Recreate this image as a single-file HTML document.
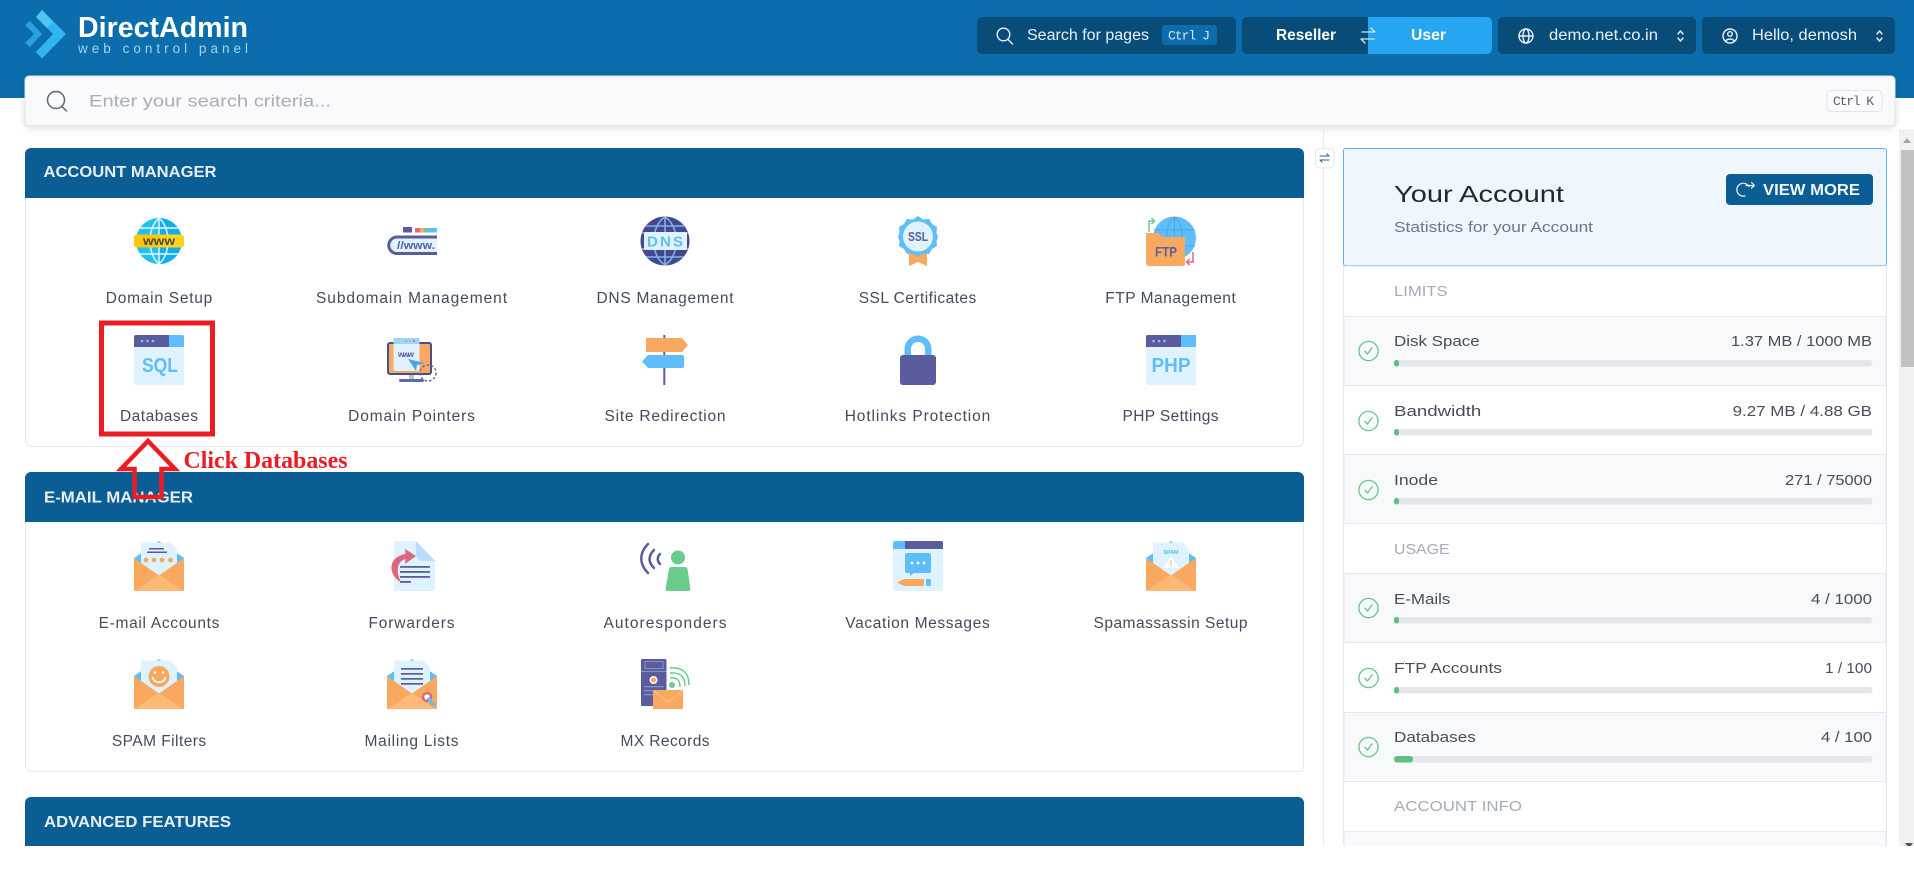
<!DOCTYPE html>
<html lang="en">
<head>
<meta charset="utf-8">
<title>DirectAdmin</title>
<style>
html,body{margin:0;padding:0;background:#fff;width:1914px;height:869px;overflow:hidden}
svg{display:block;font-family:"Liberation Sans",sans-serif}
.l{font-size:15.5px;fill:#434b5c;text-anchor:middle}
.h{font-size:15.5px;font-weight:700;fill:#e6eef4}
.t{font-size:15.5px;fill:#e8f1f7}
.s{font-size:15px;fill:#474d5a}
.v{font-size:15px;fill:#474d5a;text-anchor:end}
.g{font-size:14.5px;fill:#a6abb9}
.m{font-family:"Liberation Mono",monospace;font-size:13px}
.ln{fill:none;stroke:#e8f1f7;stroke-width:1.4;stroke-linecap:round;stroke-linejoin:round}
.ck{fill:none;stroke:#62c58a;stroke-width:1.3;stroke-linecap:round;stroke-linejoin:round}
</style>
</head>
<body>
<svg width="1914" height="869" viewBox="0 0 1914 869" xmlns="http://www.w3.org/2000/svg">
<defs>
<clipPath id="view"><rect width="1914" height="846"/></clipPath>
<clipPath id="ggl"><circle cx="25" cy="25" r="23"/></clipPath>
<clipPath id="gdn"><circle cx="25" cy="25" r="24.500"/></clipPath>
<g id="check"><circle r="9.6" class="ck"/><path class="ck" d="M-3.5 .3 -1 3 3.6 -3.2"/></g>
<g id="envBack"><polygon points="0,17 25,0 50,17 50,26 0,26" fill="#5fbdf9"/><polygon points="7,1.500 36,1.500 43,8.500 43,29 25,36 7,29" fill="#def2ff"/></g>
<g id="envFront"><path d="M0 17 25 34.500 50 17V49a1 1 0 0 1-1 1H1a1 1 0 0 1-1-1Z" fill="#f9a95f"/><path d="M1 50 25 33.500 49 50Z" fill="#ffb976"/></g>
</defs>
<g clip-path="url(#view)">

<!-- top bar -->
<rect width="1914" height="98" fill="#0b6dab"/>
<polygon points="36,17 42,10 66,34 42,58.500 36,52 53,34" fill="#2fb6ef"/>
<polygon points="25,25 30,21 42,34 30,47 25,43 34,34" fill="#2a9fd8"/>
<polygon points="36,17 42,10 53,22 47,28" fill="#4fc5f4"/>
<text x="78" y="37" font-size="29" font-weight="700" fill="#fff" textLength="170" lengthAdjust="spacingAndGlyphs">DirectAdmin</text>
<text x="78" y="53" font-size="13.500" fill="#a5d3ec" textLength="170">web control panel</text>

<rect x="977" y="17" width="259" height="37" rx="5" fill="#084c7a"/>
<circle cx="1003.500" cy="34.500" r="6.300" class="ln"/><path class="ln" d="M1008 39.500 1012.500 44"/>
<text x="1027" y="40" class="t" textLength="122" lengthAdjust="spacingAndGlyphs">Search for pages</text>
<rect x="1162" y="25" width="55" height="20" rx="3" fill="#0b6dab"/>
<text x="1168" y="39.500" class="m" fill="#d4e9f6" textLength="42">Ctrl J</text>

<rect x="1242" y="17" width="250" height="37" rx="5" fill="#084c7a"/>
<path d="M1368 17H1487a5 5 0 0 1 5 5V49a5 5 0 0 1-5 5H1368Z" fill="#26a5f0"/>
<text x="1276" y="40" class="t" style="font-weight:700;fill:#fff" textLength="60" lengthAdjust="spacingAndGlyphs">Reseller</text>
<text x="1411" y="40" class="t" style="font-weight:700;fill:#fff" textLength="35" lengthAdjust="spacingAndGlyphs">User</text>
<path d="M1362 32H1375L1371 28M1374 39H1361L1365 43" fill="none" stroke="#cfe6f5" stroke-width="1.300" stroke-linecap="round" stroke-linejoin="round"/>

<rect x="1498" y="17" width="198" height="37" rx="5" fill="#084c7a"/>
<circle cx="1526" cy="36" r="7" class="ln"/><ellipse cx="1526" cy="36" rx="3" ry="7" class="ln"/><path class="ln" d="M1519 36H1533"/>
<text x="1549" y="40" class="t" textLength="109" lengthAdjust="spacingAndGlyphs">demo.net.co.in</text>
<path class="ln" d="M1678 34 1680.500 31 1683 34M1678 38 1680.500 41 1683 38"/>

<rect x="1702" y="17" width="193" height="37" rx="5" fill="#084c7a"/>
<circle cx="1730" cy="36" r="7" class="ln"/><circle cx="1730" cy="34" r="2.300" class="ln"/><path class="ln" d="M1726 41C1727 38.500 1733 38.500 1734 41"/>
<text x="1752" y="40" class="t" textLength="105" lengthAdjust="spacingAndGlyphs">Hello, demosh</text>
<path class="ln" d="M1877 34 1879.500 31 1882 34M1877 38 1879.500 41 1882 38"/>

<!-- search -->
<rect x="25" y="76" width="1870" height="49.500" rx="4" fill="#f9fafc" stroke="#e4e7ec" style="filter:drop-shadow(0 2px 4px rgba(0,0,0,.14))"/>
<circle cx="56" cy="100" r="8.500" fill="none" stroke="#5f6673" stroke-width="1.500"/><path d="M62 106.500 66.500 111" stroke="#5f6673" stroke-width="1.500" stroke-linecap="round"/>
<text x="89" y="106.500" font-size="17" fill="#a8acb9" textLength="242" lengthAdjust="spacingAndGlyphs">Enter your search criteria...</text>
<rect x="1827" y="90.500" width="55" height="21" rx="4" fill="#fafbfc" stroke="#e2e4e8"/>
<text x="1833" y="105" class="m" fill="#5a5f69" textLength="41">Ctrl K</text>

<!-- divider + scrollbar -->
<rect x="1323" y="129" width="1" height="717" fill="#e7e9ed"/>
<rect x="1899" y="129" width="15" height="717" fill="#f1f1f1"/>
<rect x="1901" y="150" width="13" height="217" fill="#c1c1c1"/>
<polygon points="1907,138 1903,143 1911,143" fill="#a3a3a3"/>
<polygon points="1905,843 1913,843 1909,848" fill="#505050"/>

<!-- ACCOUNT MANAGER -->
<rect x="25.500" y="150" width="1278" height="296.500" rx="6" fill="#fff" stroke="#e5e7eb"/>
<path d="M25 198V154a6 6 0 0 1 6-6H1298a6 6 0 0 1 6 6V198Z" fill="#0a5e93"/>
<text x="43.500" y="177" class="h" textLength="173" lengthAdjust="spacingAndGlyphs">ACCOUNT MANAGER</text>

<text x="159" y="303" class="l" textLength="106.500">Domain Setup</text>
<text x="411.500" y="303" class="l" textLength="191">Subdomain Management</text>
<text x="665" y="303" class="l" textLength="137">DNS Management</text>
<text x="917.500" y="303" class="l" textLength="117.500">SSL Certificates</text>
<text x="1170.500" y="303" class="l" textLength="130.500">FTP Management</text>
<text x="159" y="421" class="l" textLength="78">Databases</text>
<text x="411.500" y="421" class="l" textLength="126.700">Domain Pointers</text>
<text x="665" y="421" class="l" textLength="121">Site Redirection</text>
<text x="917.500" y="421" class="l" textLength="145.600">Hotlinks Protection</text>
<text x="1170.500" y="421" class="l" textLength="96">PHP Settings</text>

<!-- www globe -->
<g transform="translate(134,216)">
<circle cx="25" cy="25" r="23" fill="#1fc1f2"/>
<g clip-path="url(#ggl)"><rect x="25" y="0" width="25" height="50" fill="#13afe6"/>
<path d="M25 2C13 12 13 38 25 48C37 38 37 12 25 2ZM25 2V48M4 12H46M2 38H48" fill="none" stroke="#e2f6fd" stroke-width="1.500"/></g>
<rect x="0" y="18.500" width="50" height="13" rx="3" fill="#ffc60a"/><rect x="25" y="18.500" width="25" height="13" rx="3" fill="#ffd321"/>
<text x="25" y="29" font-size="11.500" font-weight="700" fill="#4a4a40" text-anchor="middle" textLength="32" lengthAdjust="spacingAndGlyphs">www</text>
</g>
<!-- subdomain -->
<g transform="translate(387,216)">
<rect x="16" y="11" width="9" height="5.500" fill="#5a5c9e"/><rect x="28" y="12" width="5" height="4.500" fill="#e0667c"/><rect x="33" y="12" width="4" height="4.500" fill="#f9a95f"/><rect x="37" y="12" width="3" height="4.500" fill="#6bcb8b"/><rect x="40" y="12" width="10" height="4.500" fill="#5fbdf9"/>
<path d="M50 21H10a8 8 0 0 0 0 16.500H50" fill="#def2ff" stroke="#5a5c9e" stroke-width="3"/>
<text x="10" y="33" font-size="11" font-weight="700" fill="#5a5c9e" textLength="38" lengthAdjust="spacingAndGlyphs">//www.</text>
</g>
<!-- DNS -->
<g transform="translate(640,216)">
<circle cx="25" cy="25" r="24.500" fill="#46488f"/>
<g clip-path="url(#gdn)"><path d="M25 1C10 10 10 40 25 49C40 40 40 10 25 1ZM25 1V49M6 10H44M2 17H48M2 33H48M6 41H44" fill="none" stroke="#7fb2e8" stroke-width="1.600"/></g>
<rect x="4" y="16" width="43" height="18" rx="1" fill="#def2ff"/>
<text x="25" y="30.500" font-size="15" font-weight="700" fill="#5fbdf9" text-anchor="middle" textLength="36">DNS</text>
</g>
<!-- SSL -->
<g transform="translate(893,216)">
<polygon points="16,36 34,36 34,50 25,46 16,50" fill="#f9a95f"/>
<path d="M25 0 30 3.500 36 3 39 8 44 11 43.500 17 45 20.500 43.500 25 44 30 39 33 36 38 30 37.500 25 41 20 37.500 14 38 11 33 6 30 6.500 25 5 20.500 6.500 17 6 11 11 8 14 3 20 3.500Z" fill="#5fbdf9"/>
<circle cx="25" cy="20.500" r="15" fill="#def2ff"/>
<text x="25" y="25" font-size="12.500" font-weight="700" fill="#5a5c9e" text-anchor="middle" textLength="20" lengthAdjust="spacingAndGlyphs">SSL</text>
</g>
<!-- FTP -->
<g transform="translate(1146,216)">
<circle cx="28.500" cy="22" r="21.500" fill="#5fbdf9"/>
<path d="M28.500 1C18 8 18 36 28.500 43C39 36 39 8 28.500 1ZM8 14H49M8 30H49M28.500 1V43" fill="none" stroke="#4ea5e6" stroke-width="1"/>
<path d="M0 17H13L16 21H39V48a2 2 0 0 1-2 2H3a3 3 0 0 1-3-3Z" fill="#f9a95f"/>
<text x="9" y="40.500" font-size="14" font-weight="700" fill="#5a5c9e" textLength="22" lengthAdjust="spacingAndGlyphs">FTP</text>
<path d="M3 16V5H8M5.500 2 8.500 5 5.500 8" fill="none" stroke="#6bcb8b" stroke-width="1.500"/>
<path d="M47 36V46H41M43.500 43 40.500 46 43.500 49" fill="none" stroke="#e0667c" stroke-width="1.500"/>
</g>
<!-- SQL -->
<g transform="translate(134,335)">
<rect y="10" width="50" height="40" rx="2" fill="#def2ff"/>
<path d="M2 0H35V12H0V2A2 2 0 0 1 2 0Z" fill="#5a5c9e"/><path d="M35 0H48A2 2 0 0 1 50 2V12H35Z" fill="#5fbdf9"/>
<circle cx="8" cy="6" r="1.300" fill="#7ec6f5"/><circle cx="13.500" cy="6" r="1.300" fill="#7ec6f5"/><circle cx="19" cy="6" r="1.300" fill="#7ec6f5"/>
<text x="26" y="37" font-size="20" font-weight="700" fill="#5fbdf9" text-anchor="middle" textLength="36" lengthAdjust="spacingAndGlyphs">SQL</text>
</g>
<!-- Domain Pointers -->
<g transform="translate(387,335)">
<rect x="22" y="38" width="5" height="6" fill="#b9c4d6"/><rect x="12" y="44" width="25" height="3" rx="1.500" fill="#5a6d94"/>
<rect x="1" y="8" width="43" height="31" rx="2" fill="#f9a95f" stroke="#46508b" stroke-width="2"/>
<rect x="6.500" y="3" width="26" height="33" rx="1" fill="#def2ff"/><rect x="6.500" y="3" width="26" height="6" fill="#9dd6fb"/>
<circle cx="19" cy="6" r="1" fill="#6bcb8b"/><circle cx="23" cy="6" r="1" fill="#f9a95f"/><circle cx="27" cy="6" r="1" fill="#e0667c"/>
<text x="11" y="22" font-size="8" font-weight="700" fill="#5a5c9e" textLength="16">www</text>
<polygon points="21,24 38,28 30,30 29,36" fill="#4ea5e6"/>
<circle cx="41" cy="38" r="8" fill="none" stroke="#5a5c9e" stroke-width="1.300" stroke-dasharray="2.500 2"/>
</g>
<!-- Site Redirection -->
<g transform="translate(640,335)">
<rect x="23.300" y="0" width="2" height="50" fill="#5a5c9e"/>
<path d="M6 3H42L48 10 42 17H6Z" fill="#f9a95f"/>
<path d="M8 20H42a2 2 0 0 1 2 2V31a2 2 0 0 1-2 2H8L2 26.500Z" fill="#5fbdf9"/>
</g>
<!-- lock -->
<g transform="translate(893,335)">
<path d="M11.500 24V14a13.500 13.500 0 0 1 27 0V24H32V14a7 7 0 0 0-14 0V24Z" fill="#5fbdf9"/>
<rect x="7" y="20" width="36" height="30" rx="3" fill="#5a5c9e"/>
</g>
<!-- PHP -->
<g transform="translate(1146,335)">
<rect y="10" width="50" height="40" fill="#def2ff"/>
<path d="M1 0H35V12H0V1Z" fill="#5a5c9e"/><path d="M35 0H50V12H35Z" fill="#5fbdf9"/>
<circle cx="7.500" cy="6" r="1.300" fill="#7ec6f5"/><circle cx="13" cy="6" r="1.300" fill="#7ec6f5"/><circle cx="18.500" cy="6" r="1.300" fill="#7ec6f5"/>
<text x="25" y="37" font-size="20" font-weight="700" fill="#5fbdf9" text-anchor="middle" textLength="39" lengthAdjust="spacingAndGlyphs">PHP</text>
</g>

<!-- E-MAIL MANAGER -->
<rect x="25.500" y="474" width="1278" height="297.500" rx="6" fill="#fff" stroke="#e5e7eb"/>
<path d="M25 522V478a6 6 0 0 1 6-6H1298a6 6 0 0 1 6 6V522Z" fill="#0a5e93"/>
<text x="44" y="502.500" class="h" textLength="149" lengthAdjust="spacingAndGlyphs">E-MAIL MANAGER</text>

<text x="159" y="628" class="l" textLength="120.800">E-mail Accounts</text>
<text x="411.500" y="628" class="l" textLength="86">Forwarders</text>
<text x="665" y="628" class="l" textLength="123">Autoresponders</text>
<text x="917.500" y="628" class="l" textLength="144.400">Vacation Messages</text>
<text x="1170.500" y="628" class="l" textLength="154">Spamassassin Setup</text>
<text x="159" y="746" class="l" textLength="94.300">SPAM Filters</text>
<text x="411.500" y="746" class="l" textLength="94">Mailing Lists</text>
<text x="665" y="746" class="l" textLength="89">MX Records</text>

<!-- email accounts -->
<g transform="translate(134,541)">
<use href="#envBack"/>
<rect x="15" y="7" width="15" height="1.500" fill="#5a5c9e"/><rect x="13" y="10.500" width="20" height="1.500" fill="#5a5c9e"/>
<g fill="#f9a95f"><circle cx="12" cy="19" r="2.400"/><circle cx="20" cy="19" r="2.400"/><circle cx="28" cy="19" r="2.400"/><circle cx="36.500" cy="19" r="2.400"/></g>
<use href="#envFront"/>
</g>
<!-- forwarders -->
<g transform="translate(387,541)">
<path d="M7 2a2 2 0 0 1 2-2H29L48 20V48a2 2 0 0 1-2 2H9a2 2 0 0 1-2-2Z" fill="#def2ff"/>
<path d="M29 0 48 20H36a7 7 0 0 1-7-7Z" fill="#bcdcff"/>
<path d="M18 8 29 15 18 23 18.500 18C11 20 8 29 14 41C3 36 -2 17 18.500 13Z" fill="#e0667c"/>
<g fill="#5a5c9e"><rect x="13" y="25" width="30" height="1.800"/><rect x="13" y="30" width="30" height="1.800"/><rect x="13" y="35" width="30" height="1.800"/><rect x="13" y="40" width="11" height="1.800"/></g>
</g>
<!-- autoresponders -->
<g transform="translate(640,541)">
<g fill="none" stroke="#5a5c9e" stroke-width="2.500" stroke-linecap="round"><path d="M8 3C-1 12 -1 23 8 32"/><path d="M14 9C8 15 8 21 14 27"/><path d="M20 13C17 16 17 20 20 23"/></g>
<circle cx="38" cy="16.500" r="7" fill="#6bcb8b"/>
<path d="M29 28C29 26 31 26 33 26H43C45 26 47 26 47.500 28L50.500 48Q50.500 50 48 50H28Q25 50 25.500 48Z" fill="#6bcb8b"/>
</g>
<!-- vacation -->
<g transform="translate(893,541)">
<rect width="50" height="50" rx="2" fill="#def2ff"/>
<path d="M2 0H12V8H0V2Z" fill="#5fbdf9"/><path d="M12 0H48A2 2 0 0 1 50 2V8H12Z" fill="#5a5c9e"/>
<path d="M14 12H36a2 2 0 0 1 2 2V30a2 2 0 0 1-2 2H21L17 35V32H14a2 2 0 0 1-2-2V14a2 2 0 0 1 2-2Z" fill="#5fbdf9"/>
<circle cx="19" cy="22" r="1.400" fill="#fff"/><circle cx="25" cy="22" r="1.400" fill="#fff"/><circle cx="31" cy="22" r="1.400" fill="#fff"/>
<path d="M11 38H31V45H11L4 41.500Z" fill="#f9a95f"/><rect x="33" y="38" width="5" height="7" rx="1" fill="#5fbdf9"/>
</g>
<!-- spamassassin -->
<g transform="translate(1146,541)">
<use href="#envBack"/>
<text x="25" y="13" font-size="5.500" font-weight="700" fill="#5fbdf9" text-anchor="middle" textLength="15">SPAM</text>
<polygon points="25,16 33,27 17,27" fill="#fff"/><rect x="24.500" y="19" width="1" height="5" fill="#f9a95f"/><rect x="24.500" y="25" width="1" height="1" fill="#f9a95f"/>
<use href="#envFront"/>
</g>
<!-- spam filters -->
<g transform="translate(134,659)">
<use href="#envBack"/>
<circle cx="25" cy="17.500" r="10.500" fill="#f9a95f"/>
<circle cx="21" cy="13.500" r="1.300" fill="#fff"/><circle cx="29" cy="13.500" r="1.300" fill="#fff"/>
<path d="M18.500 18C19.500 25 30.500 25 31.500 18" fill="none" stroke="#fff" stroke-width="1.800"/>
<use href="#envFront"/>
</g>
<!-- mailing lists -->
<g transform="translate(387,659)">
<use href="#envBack"/>
<g fill="#5a5c9e"><rect x="14" y="9" width="22" height="1.700"/><rect x="14" y="14" width="22" height="1.700"/><rect x="14" y="19" width="22" height="1.700"/><rect x="14" y="24" width="22" height="1.700"/></g>
<use href="#envFront"/>
<circle cx="40" cy="38" r="4" fill="#fff" stroke="#e0667c" stroke-width="2.500"/>
<path d="M41 39 47 47" stroke="#5fbdf9" stroke-width="3.500"/>
</g>
<!-- MX -->
<g transform="translate(640,659)">
<rect x="1" y="0" width="25.500" height="47" rx="1" fill="#5a5c9e"/>
<rect x="5" y="2.500" width="18" height="7" fill="none" stroke="#8c8fc4"/><rect x="1" y="12" width="25.500" height="1" fill="#8c8fc4"/>
<circle cx="13.500" cy="21" r="4" fill="#fff"/><circle cx="13.500" cy="21" r="2.500" fill="#f9a95f"/>
<rect x="4" y="27" width="20" height="1.300" fill="#8c8fc4"/><rect x="4" y="31" width="12" height="1.300" fill="#8c8fc4"/><rect x="4" y="35" width="12" height="1.300" fill="#8c8fc4"/>
<circle cx="32" cy="26" r="3" fill="#6bcb8b"/>
<g fill="none" stroke="#6bcb8b" stroke-width="1.500"><path d="M30 19C37 18 40 21 40 28"/><path d="M30 14C40 13 45 18 45 27"/><path d="M30 9C44 8 49 15 49 26"/></g>
<rect x="13" y="31" width="30" height="19" fill="#f9a95f"/><path d="M14 32 28 43 42 32" fill="none" stroke="#ffc48a" stroke-width="1"/>
</g>

<!-- ADVANCED FEATURES -->
<path d="M25 846V803a6 6 0 0 1 6-6H1298a6 6 0 0 1 6 6V846Z" fill="#0a5e93"/>
<text x="44" y="827" class="h" textLength="187" lengthAdjust="spacingAndGlyphs">ADVANCED FEATURES</text>

<!-- sidebar toggle -->
<rect x="1315.500" y="148.500" width="18.500" height="19.500" rx="4" fill="#fff" stroke="#e3e6ea"/>
<path d="M1320 156H1329L1327 154M1329 160H1320L1322 162" fill="none" stroke="#2c5d88" stroke-width="1.100" stroke-linecap="round" stroke-linejoin="round"/>

<!-- your account -->
<rect x="1343.500" y="148.500" width="543" height="117" rx="2" fill="#eff6fe" stroke="#5fb4ea"/>
<text x="1394" y="202" font-size="23.500" fill="#222833" textLength="170" lengthAdjust="spacingAndGlyphs">Your Account</text>
<text x="1394" y="232" font-size="14.500" fill="#6e7685" textLength="199" lengthAdjust="spacingAndGlyphs">Statistics for your Account</text>
<rect x="1726" y="174" width="147" height="31" rx="4" fill="#0a5e93"/>
<path d="M1749 186.500A6.500 6.500 0 1 0 1745 196M1746 185.500H1754M1751.500 182.500 1754.500 185.500 1751.500 188" fill="none" stroke="#e8f1f7" stroke-width="1.200" stroke-linecap="round" stroke-linejoin="round"/>
<text x="1763" y="195" font-size="15.500" font-weight="700" fill="#f1f6fa" textLength="97" lengthAdjust="spacingAndGlyphs">VIEW MORE</text>

<!-- stats -->
<rect x="1343.500" y="266" width="543" height="590" fill="#fff" stroke="#e5e7ec"/>
<g fill="#f8f9fb" stroke="#e6e8ed">
<rect x="1344" y="316.500" width="542" height="69"/>
<rect x="1344" y="454.500" width="542" height="69"/>
<rect x="1344" y="573.500" width="542" height="69"/>
<rect x="1344" y="712.500" width="542" height="69"/>
<rect x="1344" y="831.500" width="542" height="40"/>
</g>
<text x="1394" y="296" class="g" textLength="53.600" lengthAdjust="spacingAndGlyphs">LIMITS</text>
<text x="1394" y="554" class="g" textLength="55.600" lengthAdjust="spacingAndGlyphs">USAGE</text>
<text x="1394" y="811" class="g" textLength="128" lengthAdjust="spacingAndGlyphs">ACCOUNT INFO</text>

<text x="1394" y="346" class="s" textLength="85.700" lengthAdjust="spacingAndGlyphs">Disk Space</text>
<text x="1872" y="346" class="v" textLength="141" lengthAdjust="spacingAndGlyphs">1.37 MB / 1000 MB</text>
<text x="1394" y="416" class="s" textLength="87.300" lengthAdjust="spacingAndGlyphs">Bandwidth</text>
<text x="1872" y="416" class="v" textLength="139.400" lengthAdjust="spacingAndGlyphs">9.27 MB / 4.88 GB</text>
<text x="1394" y="485" class="s" textLength="44" lengthAdjust="spacingAndGlyphs">Inode</text>
<text x="1872" y="485" class="v" textLength="87" lengthAdjust="spacingAndGlyphs">271 / 75000</text>
<text x="1394" y="604" class="s" textLength="56.400" lengthAdjust="spacingAndGlyphs">E-Mails</text>
<text x="1872" y="604" class="v" textLength="61" lengthAdjust="spacingAndGlyphs">4 / 1000</text>
<text x="1394" y="673" class="s" textLength="108" lengthAdjust="spacingAndGlyphs">FTP Accounts</text>
<text x="1872" y="673" class="v" textLength="47" lengthAdjust="spacingAndGlyphs">1 / 100</text>
<text x="1394" y="742" class="s" textLength="81.800" lengthAdjust="spacingAndGlyphs">Databases</text>
<text x="1872" y="742" class="v" textLength="51" lengthAdjust="spacingAndGlyphs">4 / 100</text>

<g fill="#e4e6ea">
<rect x="1394" y="360" width="478.500" height="6.500" rx="3"/>
<rect x="1394" y="429" width="478.500" height="6.500" rx="3"/>
<rect x="1394" y="498" width="478.500" height="6.500" rx="3"/>
<rect x="1394" y="617" width="478.500" height="6.500" rx="3"/>
<rect x="1394" y="687" width="478.500" height="6.500" rx="3"/>
<rect x="1394" y="756" width="478.500" height="6.500" rx="3"/>
</g>
<g fill="#5cc080">
<rect x="1394" y="360" width="5" height="6.500" rx="2.500"/>
<rect x="1394" y="429" width="5" height="6.500" rx="2.500"/>
<rect x="1394" y="498" width="5" height="6.500" rx="2.500"/>
<rect x="1394" y="617" width="5" height="6.500" rx="2.500"/>
<rect x="1394" y="687" width="5" height="6.500" rx="2.500"/>
<rect x="1394" y="756" width="19" height="6.500" rx="3"/>
</g>
<use href="#check" x="1368.500" y="351"/>
<use href="#check" x="1368.500" y="421"/>
<use href="#check" x="1368.500" y="490"/>
<use href="#check" x="1368.500" y="608"/>
<use href="#check" x="1368.500" y="678"/>
<use href="#check" x="1368.500" y="747"/>

<!-- red annotation -->
<rect x="101.500" y="323" width="111" height="111" fill="none" stroke="#ed1c24" stroke-width="5"/>
<path d="M148 441 175 469H161.500V497H134.500V469H121Z" fill="none" stroke="#ed1c24" stroke-width="4.500" stroke-linejoin="miter"/>
<text x="183.500" y="468" font-family="'Liberation Serif',serif" font-size="24" font-weight="700" fill="#ed1c24" textLength="164" lengthAdjust="spacingAndGlyphs">Click Databases</text>
</g>
</svg>
</body>
</html>
